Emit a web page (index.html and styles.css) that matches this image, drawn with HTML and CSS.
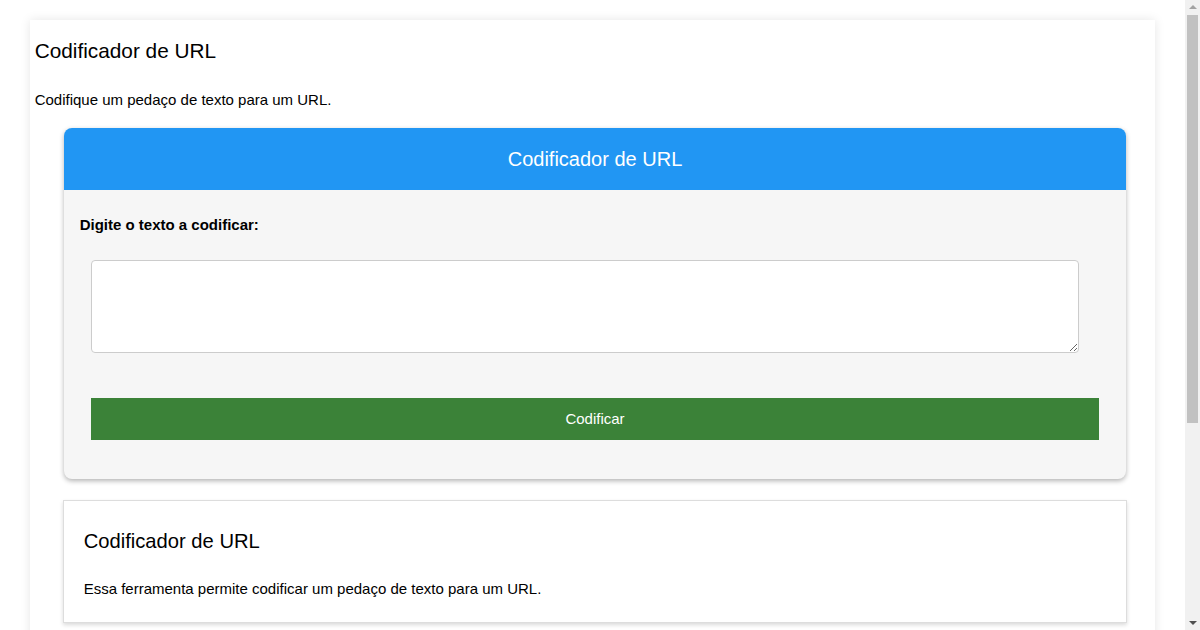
FILE: index.html
```html
<!DOCTYPE html>
<html lang="pt">
<head>
  <meta charset="UTF-8">
  <meta name="viewport" content="width=device-width, initial-scale=1.0">
  <title>Codificador de URL</title>
  <link rel="stylesheet" href="styles.css">
</head>
<body>

  <div class="container">
    <h2 class="page-title">Codificador de URL</h2>
    <p class="intro">Codifique um pedaço de texto para um URL.</p>

    <div class="tool-card">
      <div class="tool-header">Codificador de URL</div>
      <div class="tool-body">
        <label for="input" class="field-label">Digite o texto a codificar:</label>
        <div class="form">
          <textarea id="input" rows="4"></textarea>
          <button id="encode">Codificar</button>
        </div>
      </div>
    </div>

    <div class="info-card">
      <h3>Codificador de URL</h3>
      <p>Essa ferramenta permite codificar um pedaço de texto para um URL.</p>
    </div>
  </div>

  <!-- window scrollbar, as in the screenshot -->
  <div class="scrollbar">
    <span class="arrow up"></span>
    <span class="thumb"></span>
    <span class="arrow down"></span>
  </div>

  <script>
    document.getElementById("encode").addEventListener("click", function () {
      const box = document.getElementById("input");
      box.value = encodeURIComponent(box.value);
    });
  </script>

</body>
</html>
```

FILE: styles.css
```css
body {
  margin: 0 15px 0 0;
  font-family: "Liberation Sans", Arial, sans-serif;
  background: #fff;
  color: #000;
}
.container {
  width: 95%;
  margin: 20px auto;
  padding: 5px 5px 320px;
  box-sizing: border-box;
  background: #fff;
  box-shadow: 0 0 10px rgba(0, 0, 0, 0.1);
}
.page-title {
  font-size: 20.8px;
  font-weight: normal;
  line-height: 24px;
  margin: 14px 0 0;
}
.intro {
  font-size: 15px;
  line-height: 18px;
  margin: 28px 0 0;
}
.tool-card {
  margin: 19px 24px 0 29px;
  background: #f6f6f6;
  border-radius: 8px;
  box-shadow: 0 2px 5px rgba(0, 0, 0, 0.3);
  overflow: hidden;
}
.tool-header {
  background: #2196f3;
  color: #fff;
  text-align: center;
  font-size: 20px;
  line-height: 24px;
  padding: 19px;
}
.tool-body {
  padding: 26px 16px 39px;
}
.field-label {
  display: block;
  font-size: 15px;
  font-weight: bold;
  line-height: 18px;
}
.form {
  padding: 0 11px;
}
.form textarea {
  display: block;
  width: 98%;
  height: 93px;
  margin-top: 26px;
  box-sizing: border-box;
  border: 1px solid #ccc;
  border-radius: 4px;
  background: #fff;
  font-family: inherit;
  font-size: 15px;
}
#encode {
  display: block;
  width: 100%;
  height: 42px;
  margin-top: 45px;
  padding: 0 0 2px;
  background: #3b8238;
  color: #fff;
  border: none;
  font-family: inherit;
  font-size: 15px;
  cursor: pointer;
}
.info-card {
  margin: 21px 23px 0 28px;
  padding: 28px 20px 24px;
  border: 1px solid #ddd;
  box-shadow: 0 2px 4px rgba(0, 0, 0, 0.15);
  background: #fff;
}
.info-card h3 {
  font-size: 20.2px;
  font-weight: normal;
  line-height: 24px;
  margin: 0;
}
.info-card p {
  font-size: 15px;
  line-height: 18px;
  margin: 27px 0 0;
}
.scrollbar {
  position: fixed;
  top: 0;
  right: 0;
  width: 15px;
  height: 100%;
  background: #f1f1f1;
}
.thumb {
  position: absolute;
  top: 15px;
  left: 2px;
  width: 11px;
  height: 408px;
  background: #c1c1c1;
}
.arrow {
  position: absolute;
  left: 4px;
  width: 0;
  height: 0;
  border-left: 4px solid transparent;
  border-right: 4px solid transparent;
}
.arrow.up {
  top: 5px;
  border-bottom: 4px solid #a3a3a3;
}
.arrow.down {
  bottom: 5px;
  border-top: 4px solid #505050;
}
```
